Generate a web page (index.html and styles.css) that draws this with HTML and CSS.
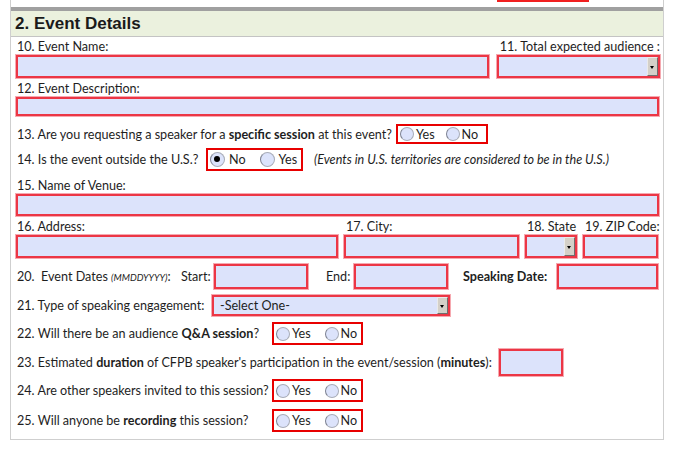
FILE: index.html
```html
<html>
<head>
<title>Event Details</title>
<link rel="stylesheet" href="styles.css">
</head>
<body>
<div class="form_panel">
    <div class="prev_tail"><span class="prev_box"></span></div>
    <div class="section_header">2. Event Details</div>
    <div class="section_body">

	<div class="label_row r_labels1">
	    <span>10. Event Name:</span>
	    <span>11. Total expected audience :</span>
	</div>
	<div class="field_row r_fields1">
	    <div class="field f_name"></div>
	    <div class="field f_audience"><span class="drop_btn"></span></div>
	</div>

	<div class="label_row r_labels2">
	    <span>12. Event Description:</span>
	</div>
	<div class="field_row">
	    <div class="field f_desc"></div>
	</div>

	<div class="q_row r_q13">
	    <span class="l_q13">13. Are you requesting a speaker for a <b>specific session</b> at this event?</span>
	    <div class="radio_group rg_13">
		<span class="radio"></span><span class="opt">Yes</span>
		<span class="radio"></span><span class="opt">No</span>
	    </div>
	</div>

	<div class="q_row r_q14">
	    <span class="l_q14">14. Is the event outside the U.S.?</span>
	    <div class="radio_group rg_14">
		<span class="radio checked"></span><span class="opt">No</span>
		<span class="radio"></span><span class="opt">Yes</span>
	    </div>
	    <span class="note">(Events in U.S. territories are considered to be in the U.S.)</span>
	</div>

	<div class="label_row r_labels3">
	    <span>15. Name of Venue:</span>
	</div>
	<div class="field_row">
	    <div class="field f_venue"></div>
	</div>

	<div class="label_row r_labels4">
	    <span class="l_address">16. Address:</span>
	    <span class="l_city">17. City:</span>
	    <span class="l_state">18. State</span>
	    <span class="l_zip">19. ZIP Code:</span>
	</div>
	<div class="field_row r_fields4">
	    <div class="field f_address"></div>
	    <div class="field f_city"></div>
	    <div class="field f_state"><span class="drop_btn"></span></div>
	    <div class="field f_zip"></div>
	</div>

	<div class="q_row r_q20">
	    <span class="l_dates">20.&nbsp; Event Dates <i class="small">(MMDDYYYY)</i>:</span>
	    <span class="l_start">Start:</span>
	    <div class="field f_date"></div>
	    <span class="l_end">End:</span>
	    <div class="field f_date"></div>
	    <b class="l_speak">Speaking Date:</b>
	    <div class="field f_speak"></div>
	</div>

	<div class="q_row r_q21">
	    <span class="l_type">21. Type of speaking engagement:</span>
	    <div class="field f_type"><span class="sel_text">-Select One-</span><span class="drop_btn"></span></div>
	</div>

	<div class="q_row r_q22">
	    <span class="l_yn">22. Will there be an audience <b>Q&amp;A session</b>?</span>
	    <div class="radio_group rg_yn">
		<span class="radio"></span><span class="opt">Yes</span>
		<span class="radio"></span><span class="opt">No</span>
	    </div>
	</div>

	<div class="q_row r_q23">
	    <span class="l_q23">23. Estimated <b>duration</b> of CFPB speaker's participation in the event/session (<b>minutes</b>):</span>
	    <div class="field f_minutes"></div>
	</div>

	<div class="q_row r_q24">
	    <span class="l_yn">24. Are other speakers invited to this session?</span>
	    <div class="radio_group rg_yn">
		<span class="radio"></span><span class="opt">Yes</span>
		<span class="radio"></span><span class="opt">No</span>
	    </div>
	</div>

	<div class="q_row r_q25">
	    <span class="l_yn">25. Will anyone be <b>recording</b> this session?</span>
	    <div class="radio_group rg_yn">
		<span class="radio"></span><span class="opt">Yes</span>
		<span class="radio"></span><span class="opt">No</span>
	    </div>
	</div>

    </div>
</div>
</body>
</html>
```

FILE: styles.css
```css
body {
    margin: 0;
    background-color: #FFFFFF;
    color: #1E1E1E;
    font-family: Lato, "Open Sans", sans-serif;
    font-size: 12.6px;
}

b {
    font-weight: 700;
}

.form_panel {
    width: 652px;
    height: 439px;
    margin-left: 10px;
    border-left: 1px solid #CFCFCF;
    border-right: 1px solid #CFCFCF;
    border-bottom: 1px solid #CFCFCF;
}

.prev_tail {
    height: 7px;
}
.prev_box {
    display: block;
    width: 88px;
    height: 0;
    margin-left: 486px;
    border-bottom: 2px solid #F02020;
    border-left: 2px solid #F02020;
    border-right: 2px solid #F02020;
}

.section_header {
    border-top: 4px solid #A0A0A0;
    border-bottom: 1px solid #C4C4C4;
    background-color: #EBF1DE;
    height: 25px;
    line-height: 25px;
    padding-left: 4px;
    font-family: "Liberation Sans", Arial, sans-serif;
    font-weight: 700;
    font-size: 17px;
    color: #1A1A1A;
}

.section_body {
    padding-left: 4px;
    padding-right: 2px;
}

/* label rows sit right above their fields */
.label_row {
    display: flex;
    justify-content: space-between;
    align-items: flex-end;
    line-height: 15px;
    padding-left: 2px;
    padding-right: 1px;
}
.r_labels1 { height: 17px; }
.r_labels2 { height: 17px; }
.r_labels3 { height: 22px; }
.r_labels4 { height: 17px; justify-content: flex-start; }

.field_row {
    display: flex;
    gap: 6px;
}
.r_fields4 { gap: 4px; }

.field {
    box-sizing: border-box;
    position: relative;
    flex: none;
    background-color: #DCE3FB;
    border: 1px solid #F6A9B0;
    box-shadow: inset 0 0 0 2px #EC3645;
}
.f_name { width: 475px; height: 25px; }
.f_audience { width: 165px; height: 25px; }
.f_desc { width: 645px; height: 21px; }
.f_venue { width: 645px; height: 24px; }
.f_address { width: 324px; height: 25px; }
.f_city { width: 177px; height: 25px; }
.f_state { width: 54px; height: 25px; }
.f_zip { width: 77px; height: 25px; }

.l_address { width: 329px; }
.l_city { width: 181px; }
.l_state { width: 58px; }

.drop_btn {
    position: absolute;
    right: 2px;
    top: 2px;
    bottom: 2px;
    width: 9px;
    background-color: #D4D0C8;
    border: 1px solid #6E6E6E;
    border-top-color: #EAEAEA;
    border-left-color: #EAEAEA;
}
.drop_btn:after {
    content: "";
    position: absolute;
    left: 2px;
    top: 50%;
    margin-top: -1px;
    border-left: 2.5px solid transparent;
    border-right: 2.5px solid transparent;
    border-top: 3px solid #000000;
}

.q_row {
    display: flex;
    align-items: center;
    padding-left: 2px;
}
.r_q13 { height: 28px; margin-top: 3px; }
.r_q14 { height: 23px; }
.r_q20 { height: 27px; margin-top: 4px; }
.r_q21 { height: 23px; margin-top: 4px; }
.r_q22 { height: 23px; margin-top: 5px; }
.r_q23 { height: 29px; margin-top: 3px; }
.r_q24 { height: 23px; margin-top: 2px; }
.r_q25 { height: 23px; margin-top: 7px; }

.l_q13 { width: 379px; flex: none; white-space: nowrap; }
.l_q14 { width: 189px; flex: none; }
.l_yn { width: 255px; flex: none; }
.l_q23 { width: 481px; flex: none; white-space: nowrap; }

.radio_group {
    display: flex;
    align-items: center;
    box-sizing: border-box;
    flex: none;
    border: 2px solid #E80000;
    padding-left: 2px;
}
.rg_13 { width: 92px; height: 20px; }
.rg_14 { width: 97px; height: 23px; }
.rg_yn { width: 91px; height: 23px; }

.radio {
    box-sizing: border-box;
    display: inline-block;
    flex: none;
    width: 14px;
    height: 14px;
    border-radius: 50%;
    background-color: #DCE3FB;
    border: 1px solid #A8ACB8;
    border-left-color: #7C8090;
    position: relative;
}
.radio.checked:after {
    content: "";
    position: absolute;
    left: 3px;
    top: 3px;
    width: 6px;
    height: 6px;
    border-radius: 50%;
    background-color: #000000;
}
.opt {
    margin-left: 2px;
    margin-right: 11px;
}
.radio_group .opt:last-child {
    margin-right: 0;
}
.rg_14 .radio { width: 15px; height: 15px; }
.rg_14 .opt { margin-left: 4px; margin-right: 14px; }
.rg_yn .opt { margin-left: 2px; margin-right: 14px; }

.note {
    font-style: italic;
    margin-left: 11px;
    white-space: nowrap;
}

.small {
    font-size: 9.5px;
}

.l_dates { width: 164px; flex: none; }
.l_start { width: 32px; flex: none; }
.f_date { width: 96px; height: 27px; }
.l_end { margin-left: 17px; width: 27px; flex: none; }
.l_speak { margin-left: 14px; width: 93px; flex: none; }
.f_speak { width: 103px; height: 27px; }

.l_type { width: 194px; flex: none; }
.f_type { width: 240px; height: 23px; }
.sel_text {
    display: block;
    padding-left: 8px;
    line-height: 21px;
}

.f_minutes { width: 66px; height: 29px; }
```
